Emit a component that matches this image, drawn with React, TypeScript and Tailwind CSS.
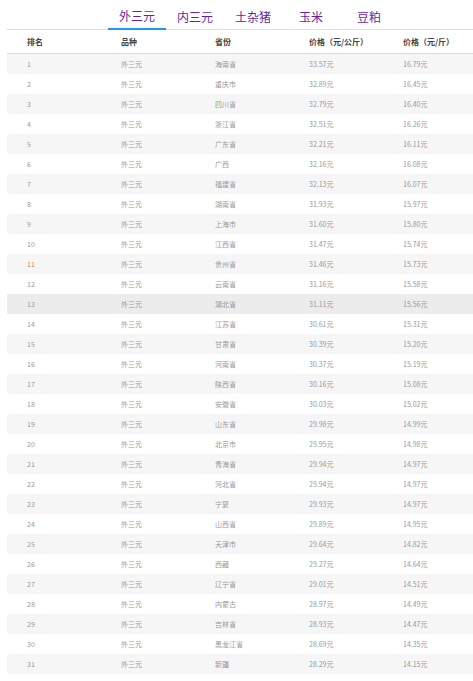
const TABS = ["外三元", "内三元", "土杂猪", "玉米", "豆粕"];

const HEAD = ["排名", "品种", "省份", "价格（元/公斤）", "价格（元/斤）"];

const ROWS: [string, string, string][] = [
  ["海南省", "33.57", "16.79"],
  ["重庆市", "32.89", "16.45"],
  ["四川省", "32.79", "16.40"],
  ["浙江省", "32.51", "16.26"],
  ["广东省", "32.21", "16.11"],
  ["广西", "32.16", "16.08"],
  ["福建省", "32.13", "16.07"],
  ["湖南省", "31.93", "15.97"],
  ["上海市", "31.60", "15.80"],
  ["江西省", "31.47", "15.74"],
  ["贵州省", "31.46", "15.73"],
  ["云南省", "31.16", "15.58"],
  ["湖北省", "31.11", "15.56"],
  ["江苏省", "30.61", "15.31"],
  ["甘肃省", "30.39", "15.20"],
  ["河南省", "30.37", "15.19"],
  ["陕西省", "30.16", "15.08"],
  ["安徽省", "30.03", "15.02"],
  ["山东省", "29.98", "14.99"],
  ["北京市", "29.95", "14.98"],
  ["青海省", "29.94", "14.97"],
  ["河北省", "29.94", "14.97"],
  ["宁夏", "29.93", "14.97"],
  ["山西省", "29.89", "14.95"],
  ["天津市", "29.64", "14.82"],
  ["西藏", "29.27", "14.64"],
  ["辽宁省", "29.01", "14.51"],
  ["内蒙古", "28.97", "14.49"],
  ["吉林省", "28.93", "14.47"],
  ["黑龙江省", "28.69", "14.35"],
  ["新疆", "28.29", "14.15"],
];

export default function App() {
  return (
    <div
      className="min-h-[681px] w-full overflow-hidden bg-white pl-[7px]"
      style={{ fontFamily: '"Noto Sans CJK SC", "Noto Sans", sans-serif' }}
    >
      <div className="flex h-[30px] border-b border-[#dddddd] pl-[101px] pt-[4px]">
        {TABS.map((tab, i) => (
          <div
            key={tab}
            className={`-mb-px flex w-[58px] items-center justify-center text-[12px] leading-none text-[#6a1fa0] ${
              i === 0 ? "border-b-2 border-[#2196f3]" : ""
            }`}
          >
            {tab}
          </div>
        ))}
      </div>

      <div className="flex h-[24px] items-center border-b border-[#dddddd]">
        {HEAD.map((h) => (
          <div key={h} className="w-[94px] shrink-0 pl-[20px] text-[8px] font-bold leading-none text-[#444]">
            {h}
          </div>
        ))}
      </div>

      {ROWS.map(([prov, kg, jin], i) => {
        const n = i + 1;
        const bg = n === 13 ? "bg-[#ececec]" : n % 2 === 1 ? "bg-[#f6f6f6]" : "bg-white";
        const cells = [String(n), "外三元", prov, `${kg}元`, `${jin}元`];
        return (
          <div key={n} className={`flex h-[20px] items-center ${bg}`}>
            {cells.map((c, j) => (
              <div
                key={j}
                className={`w-[94px] shrink-0 pl-[20px] text-[7px] leading-none ${
                  n === 11 && j === 0 ? "text-[#c48a5a]" : "text-[#999]"
                }`}
              >
                {c}
              </div>
            ))}
          </div>
        );
      })}
    </div>
  );
}
